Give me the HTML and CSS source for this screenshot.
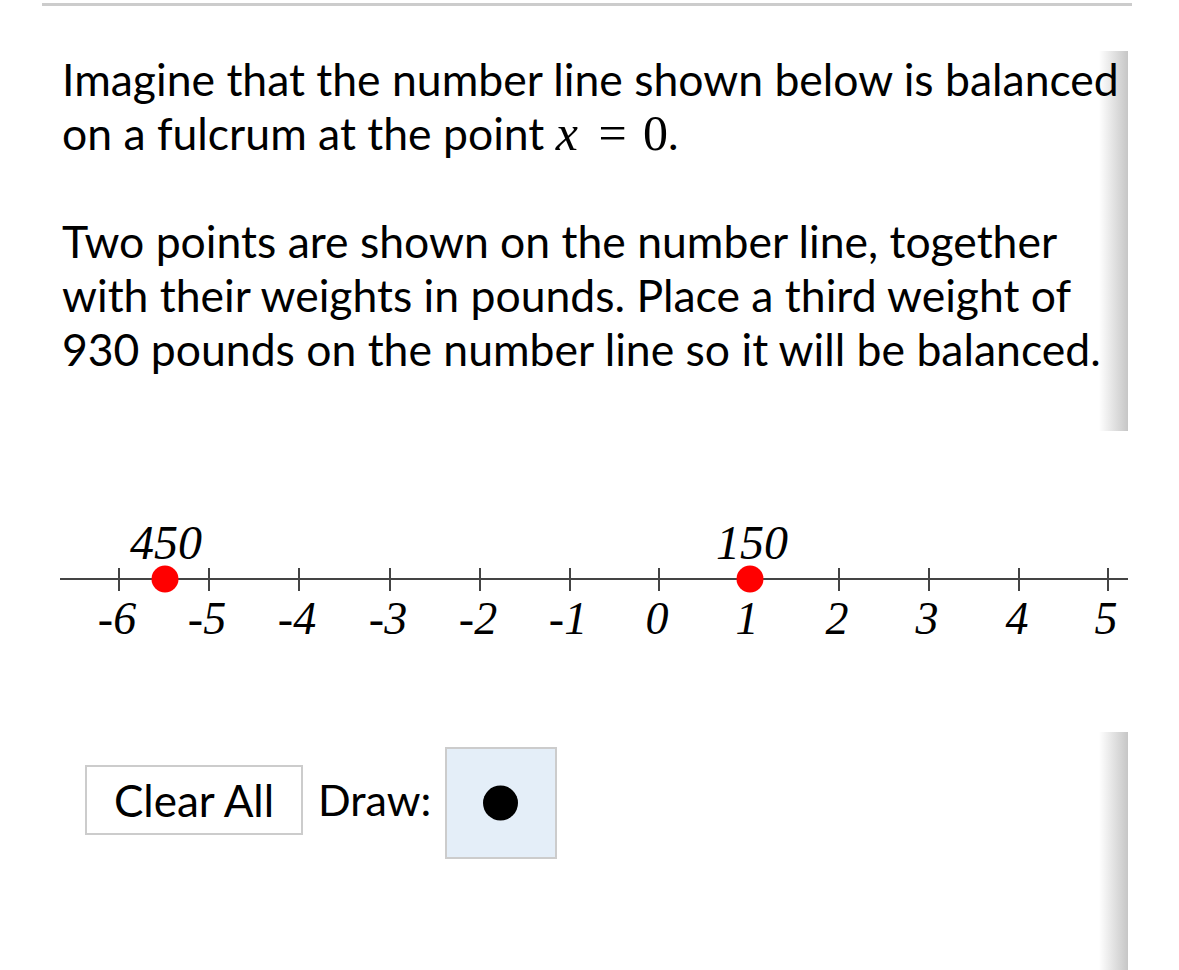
FILE: index.html
```html
<!DOCTYPE html>
<html>
<head>
<meta charset="utf-8">
<link rel="stylesheet" href="styles.css">
</head>
<body>
<div class="page">
  <div class="rule"></div>
  <div class="shade shade-top"></div>
  <div class="shade shade-bottom"></div>
  <div class="question">
    <p>Imagine that the number line shown below is balanced on a fulcrum at the point <span class="math"><span class="mi">x</span> <span class="mo">=</span> <span class="mn">0</span></span>.</p>
    <p>Two points are shown on the number line, together with their weights in pounds. Place a third weight of 930 pounds on the number line so it will be balanced.</p>
  </div>
  <div class="graph">
    <svg class="numline" width="1179" height="150" viewBox="0 0 1179 150">
      <line x1="60" y1="81" x2="1128" y2="81" stroke="#444" stroke-width="2"/>
      <g stroke="#444" stroke-width="2">
        <line x1="119" y1="70" x2="119" y2="93"/>
        <line x1="209" y1="70" x2="209" y2="93"/>
        <line x1="299" y1="70" x2="299" y2="93"/>
        <line x1="390" y1="70" x2="390" y2="93"/>
        <line x1="480" y1="70" x2="480" y2="93"/>
        <line x1="570" y1="70" x2="570" y2="93"/>
        <line x1="659" y1="70" x2="659" y2="93"/>
        <line x1="749" y1="70" x2="749" y2="93"/>
        <line x1="839" y1="70" x2="839" y2="93"/>
        <line x1="929" y1="70" x2="929" y2="93"/>
        <line x1="1019" y1="70" x2="1019" y2="93"/>
        <line x1="1108" y1="70" x2="1108" y2="93"/>
      </g>
      <g class="lbl" text-anchor="middle">
        <text x="117" y="136">-6</text>
        <text x="207" y="136">-5</text>
        <text x="297" y="136">-4</text>
        <text x="388" y="136">-3</text>
        <text x="478" y="136">-2</text>
        <text x="568" y="136">-1</text>
        <text x="657" y="136">0</text>
        <text x="747" y="136">1</text>
        <text x="837" y="136">2</text>
        <text x="927" y="136">3</text>
        <text x="1017" y="136">4</text>
        <text x="1106" y="136">5</text>
        <text class="w" x="166" y="61">450</text>
        <text class="w" x="752" y="61">150</text>
      </g>
      <circle cx="165" cy="81" r="13.5" fill="#ff0000"/>
      <circle cx="750" cy="81" r="13.5" fill="#ff0000"/>
    </svg>
  </div>
  <div class="toolbar">
    <button class="btn">Clear All</button>
    <span class="draw-label">Draw:</span>
    <div class="tool">
      <svg width="36" height="36" viewBox="0 0 36 36"><circle cx="17.5" cy="18" r="17.5" fill="#000"/></svg>
    </div>
  </div>
</div>
</body>
</html>
```

FILE: styles.css
```css
html, body {
  margin: 0;
  padding: 0;
  background: #fff;
}
.page {
  position: relative;
  width: 1179px;
  height: 970px;
  overflow: hidden;
  font-family: Lato, "Open Sans", sans-serif;
  color: #000;
}
.rule {
  margin: 3px 0 0 42px;
  width: 1090px;
  height: 3px;
  background: #cccccc;
}
.shade {
  position: absolute;
  left: 1099px;
  width: 29px;
  background: linear-gradient(to right, #ffffff, #c6c6c6);
  z-index: 0;
}
.shade-top {
  top: 51px;
  height: 380px;
}
.shade-bottom {
  top: 732px;
  height: 238px;
}
.question {
  position: relative;
  z-index: 1;
  padding: 46px 0 0 62px;
  width: 1080px;
  font-size: 44.5px;
  line-height: 54px;
}
.question p {
  margin: 0 0 54px 0;
}
.math {
  font-family: "Liberation Serif", serif;
  font-size: 50px;
  word-spacing: 4px;
}
.mi {
  font-style: italic;
  padding-right: 4px;
}
.graph {
  position: relative;
  z-index: 1;
  margin-top: 122px;
  height: 150px;
}
.numline {
  display: block;
}
.lbl text {
  font-family: "Liberation Serif", serif;
  font-style: italic;
  font-size: 46px;
  fill: #000;
}
.lbl text.w {
  font-size: 48px;
}
.toolbar {
  position: relative;
  z-index: 1;
  display: flex;
  align-items: flex-start;
  margin-top: 99px;
  padding-left: 85px;
}
.btn {
  font-family: Lato, "Open Sans", sans-serif;
  font-size: 44px;
  background: #fff;
  border: 2px solid #cccccc;
  color: #000;
  width: 218px;
  height: 70px;
  padding: 0;
  margin: 18px 0 0 0;
}
.draw-label {
  font-size: 43px;
  line-height: 70px;
  margin: 18px 14px 0 15px;
}
.tool {
  width: 108px;
  height: 108px;
  background: #e4eef8;
  border: 2px solid #cccccc;
  display: flex;
  align-items: center;
  justify-content: center;
}
```
